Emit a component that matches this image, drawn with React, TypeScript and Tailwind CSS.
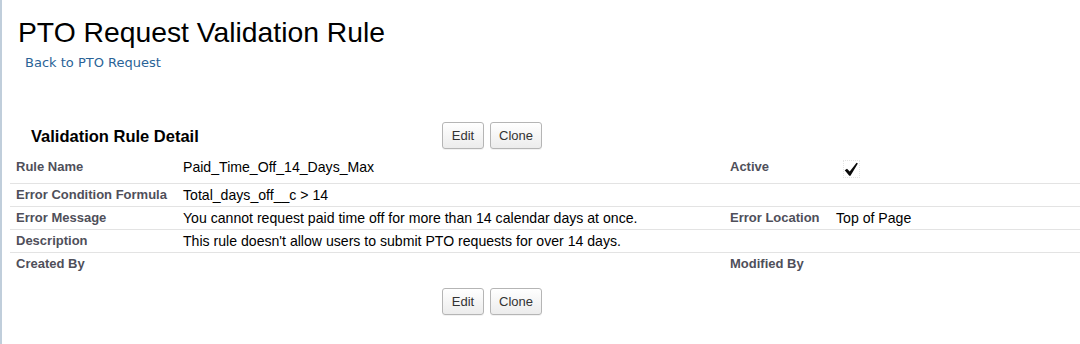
import React from "react";

const Btn = ({ label, w }: { label: string; w: string }) => (
  <button
    className={`${w} h-[27px] rounded-[3px] border border-[#b5b5b5] bg-gradient-to-b from-white to-[#ececec] text-center text-[13px] leading-[25px] text-[#333] shadow-[0_1px_0_rgba(0,0,0,0.05)]`}
  >
    {label}
  </button>
);

const Buttons = () => (
  <div className="flex gap-[6px]">
    <Btn label="Edit" w="w-[42px]" />
    <Btn label="Clone" w="w-[52px]" />
  </div>
);

const Check = () => (
  <div className="ml-[7px] mt-[1px] flex h-[18px] w-[17px] items-center justify-center border border-dotted border-[#e4e4e4]">
    <svg width="16" height="16" viewBox="0 0 16 16">
      <path d="M0.8 9.4 L3.2 7.6 L6.1 10.6 L13.4 1.2 L14.8 2.2 L6.9 15.2 L5.6 15.2 Z" fill="#0a0a0a" />
    </svg>
  </div>
);

export default function App() {
  const lab = "pl-[6px] text-[13px] font-bold leading-[16px] text-[#4f4f5a]";
  const dat = "pl-[7px] text-[14.1px] leading-[16px] text-[#000]";
  const b = "border-b border-[#e3e3e3]";
  const r1 = `h-[29px] pt-[4px] ${b}`;
  const r = `h-[23px] pt-[3px] ${b}`;
  const rl = "h-[23px] pt-[3px]";
  return (
    <div className="min-h-[344px] border-l-2 border-[#c0cedb] bg-white font-['Liberation_Sans',Arial,sans-serif]">
      <div className="pl-[16px] pt-[16px]">
        <h1 className="text-[28.3px] font-normal leading-[32px] text-black">PTO Request Validation Rule</h1>
      </div>
      <div className="mt-[2px] pl-[23px]">
        <a className="font-['DejaVu_Sans',Verdana,sans-serif] text-[13px] leading-[16px] text-[#2a6397]">
          Back to PTO Request
        </a>
      </div>
      <div className="ml-[8px] mt-[48px]">
        <div className="flex h-[27px] items-center">
          <div className="w-[432px] pl-[21px] text-[16.5px] font-bold leading-[20px] text-black">
            Validation Rule Detail
          </div>
          <Buttons />
        </div>
        <div className="mt-[6px] grid grid-cols-[166px_548px_105px_1fr]">
          <div className={`${r1} ${lab}`}>Rule Name</div>
          <div className={`${r1} ${dat}`}>Paid_Time_Off_14_Days_Max</div>
          <div className={`${r1} ${lab}`}>Active</div>
          <div className={`h-[29px] pt-[4px] ${b} pl-[7px]`}>
            <Check />
          </div>

          <div className={`${r} ${lab}`}>Error Condition Formula</div>
          <div className={`${r} ${dat}`}>Total_days_off__c &gt; 14</div>
          <div className={`${r} ${lab}`}></div>
          <div className={`${r} ${dat}`}></div>

          <div className={`${r} ${lab}`}>Error Message</div>
          <div className={`${r} ${dat}`}>
            You cannot request paid time off for more than 14 calendar days at once.
          </div>
          <div className={`${r} ${lab}`}>Error Location</div>
          <div className={`${r} ${dat}`}>Top of Page</div>

          <div className={`${r} ${lab}`}>Description</div>
          <div className={`${r} ${dat}`}>
            This rule doesn't allow users to submit PTO requests for over 14 days.
          </div>
          <div className={`${r} ${lab}`}></div>
          <div className={`${r} ${dat}`}></div>

          <div className={`${rl} ${lab}`}>Created By</div>
          <div className={`${rl} ${dat}`}></div>
          <div className={`${rl} ${lab}`}>Modified By</div>
          <div className={`${rl} ${dat}`}></div>
        </div>
        <div className="mt-[12px] pl-[432px]">
          <Buttons />
        </div>
      </div>
    </div>
  );
}
